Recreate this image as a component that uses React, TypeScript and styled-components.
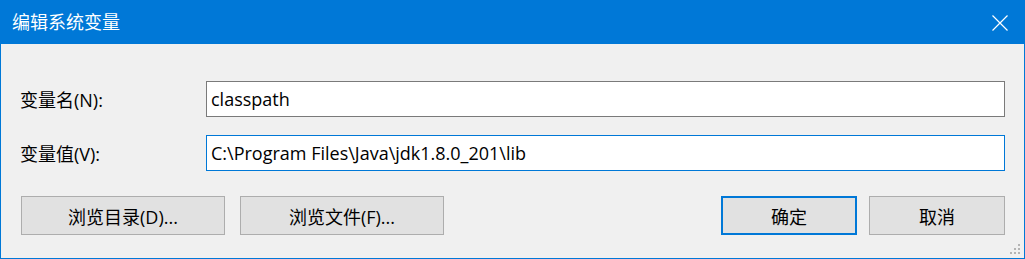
import { createGlobalStyle, styled } from "styled-components";

const GlobalStyle = createGlobalStyle`
  html, body {
    margin: 0;
    padding: 0;
    background: #f0f0f0;
  }
  * {
    box-sizing: border-box;
  }
`;

const font = `"Open Sans", "Noto Sans CJK SC", sans-serif`;

const Window = styled.div`
  position: relative;
  width: 1025px;
  height: 259px;
  border: 1px solid #0078d7;
  background: #f0f0f0;
  display: flex;
  flex-direction: column;
  font-family: ${font};
  font-size: 18px;
  color: #000;
`;

const TitleBar = styled.div`
  height: 43px;
  background: #0078d7;
  display: flex;
  align-items: center;
  justify-content: space-between;
  padding-left: 11px;
`;

const Title = styled.span`
  color: #fff;
  font-size: 18px;
  line-height: 1;
  margin-top: -1px;
`;

const CloseButton = styled.div`
  width: 46px;
  height: 100%;
  display: flex;
  align-items: center;
  justify-content: center;
  margin-right: 1px;
  margin-top: 1px;
`;

const Body = styled.div`
  flex: 1;
  display: flex;
  flex-direction: column;
  padding: 37px 19px 0 20px;
`;

const Field = styled.div`
  display: flex;
  align-items: center;
  margin-bottom: 18px;
`;

const Label = styled.label`
  width: 186px;
  margin-left: -1px;
  white-space: nowrap;
`;

const Input = styled.input<{ $focused?: boolean }>`
  flex: 1;
  height: 36px;
  border: 1px solid ${({ $focused }) => ($focused ? "#0078d7" : "#7a7a7a")};
  background: #fff;
  font-family: ${font};
  font-size: 18px;
  color: #000;
  padding: 0 4px;
  outline: none;
`;

const ButtonRow = styled.div`
  display: flex;
  justify-content: space-between;
  margin-top: 7px;
`;

const ButtonGroup = styled.div<{ $gap: number }>`
  display: flex;
  gap: ${({ $gap }) => $gap}px;
`;

const Button = styled.button<{ $width: number; $primary?: boolean }>`
  width: ${({ $width }) => $width}px;
  height: 39px;
  background: #e1e1e1;
  border: ${({ $primary }) => ($primary ? "2px solid #0078d7" : "1px solid #adadad")};
  font-family: ${font};
  font-size: 18px;
  color: #000;
  padding: 0;
  display: flex;
  align-items: center;
  justify-content: center;
`;

const Grip = styled.svg`
  position: absolute;
  right: 2px;
  bottom: 2px;
`;

export default function App() {
  return (
    <>
      <GlobalStyle />
      <Window>
        <TitleBar>
          <Title>编辑系统变量</Title>
          <CloseButton>
            <svg width="16" height="16" viewBox="0 0 16 16">
              <path d="M0.5 0.5 L15.5 15.5 M15.5 0.5 L0.5 15.5" stroke="#fff" strokeWidth="1.2" />
            </svg>
          </CloseButton>
        </TitleBar>
        <Body>
          <Field>
            <Label>变量名(N):</Label>
            <Input defaultValue="classpath" />
          </Field>
          <Field>
            <Label>变量值(V):</Label>
            <Input $focused defaultValue="C:\Program Files\Java\jdk1.8.0_201\lib" />
          </Field>
          <ButtonRow>
            <ButtonGroup $gap={15}>
              <Button $width={204}>浏览目录(D)...</Button>
              <Button $width={204}>浏览文件(F)...</Button>
            </ButtonGroup>
            <ButtonGroup $gap={12}>
              <Button $width={136} $primary>确定</Button>
              <Button $width={136}>取消</Button>
            </ButtonGroup>
          </ButtonRow>
        </Body>
        <Grip width="12" height="12" viewBox="0 0 12 12">
          <rect x="8" y="0" width="2" height="2" fill="#b4b4b4" />
          <rect x="4" y="4" width="2" height="2" fill="#b4b4b4" />
          <rect x="8" y="4" width="2" height="2" fill="#b4b4b4" />
          <rect x="0" y="8" width="2" height="2" fill="#b4b4b4" />
          <rect x="4" y="8" width="2" height="2" fill="#b4b4b4" />
          <rect x="8" y="8" width="2" height="2" fill="#b4b4b4" />
        </Grip>
      </Window>
    </>
  );
}
